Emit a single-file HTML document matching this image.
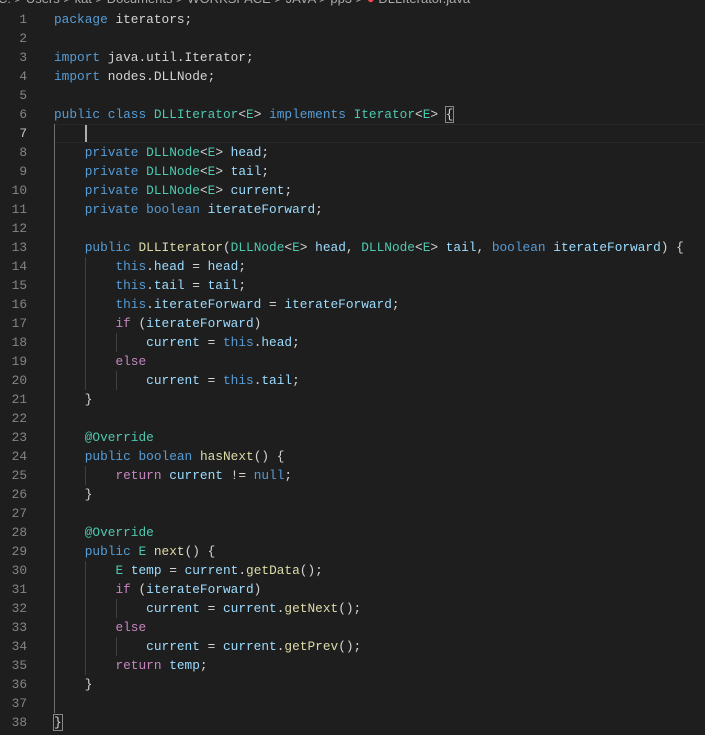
<!DOCTYPE html>
<html><head><meta charset="utf-8">
<style>
html,body{margin:0;padding:0;background:#1e1e1e;}
body{width:705px;height:735px;overflow:hidden;position:relative;}
.bc{position:absolute;left:-2px;top:-9px;font:13px "Liberation Sans",sans-serif;color:#a9a9a9;white-space:pre;}
.ln{position:absolute;left:0;width:27px;text-align:right;font:12.8px/19px "Liberation Mono",monospace;color:#858585;}
.code{position:absolute;left:54px;top:10px;font:12.8px/19px "Liberation Mono",monospace;color:#d4d4d4;white-space:normal;}
.code div{height:19px;white-space:pre;}
.k{color:#569cd6}.t{color:#4ec9b0}.v{color:#9cdcfe}.c{color:#c586c0}.f{color:#dcdcaa}
.g{position:absolute;width:1px;background:#404040;}
.cur{position:absolute;left:54px;right:0;top:124px;height:17px;border-top:1px solid #282828;border-bottom:1px solid #282828;}
.box{outline:1px solid #888;}
</style></head><body>
<div class="bc">C: &gt; Users &gt; kat &gt; Documents &gt; WORKSPACE &gt; JAVA &gt; pp3 &gt; <span style="color:#f14c4c">●</span> DLLIterator.java</div>
<div class="cur"></div>
<div class="ln" style="top:10px">1<br>2<br>3<br>4<br>5<br>6<br><span style="color:#c6c6c6">7</span><br>8<br>9<br>10<br>11<br>12<br>13<br>14<br>15<br>16<br>17<br>18<br>19<br>20<br>21<br>22<br>23<br>24<br>25<br>26<br>27<br>28<br>29<br>30<br>31<br>32<br>33<br>34<br>35<br>36<br>37<br>38</div>
<div class="g" style="left:54px;top:124px;height:589px;background:#707070"></div>
<div class="g" style="left:85px;top:257px;height:133px"></div>
<div class="g" style="left:85px;top:466px;height:19px"></div>
<div class="g" style="left:85px;top:561px;height:114px"></div>
<div class="g" style="left:116px;top:333px;height:19px"></div>
<div class="g" style="left:116px;top:371px;height:19px"></div>
<div class="g" style="left:116px;top:599px;height:19px"></div>
<div class="g" style="left:116px;top:637px;height:19px"></div>
<div style="position:absolute;left:85px;top:125px;width:2px;height:17px;background:#aeafad"></div>
<div class="code">
<div><span class="k">package</span> iterators;</div>
<div></div>
<div><span class="k">import</span> java.util.Iterator;</div>
<div><span class="k">import</span> nodes.DLLNode;</div>
<div></div>
<div><span class="k">public</span> <span class="k">class</span> <span class="t">DLLIterator</span>&lt;<span class="t">E</span>&gt; <span class="k">implements</span> <span class="t">Iterator</span>&lt;<span class="t">E</span>&gt; <span class="box">{</span></div>
<div></div>
<div>    <span class="k">private</span> <span class="t">DLLNode</span>&lt;<span class="t">E</span>&gt; <span class="v">head</span>;</div>
<div>    <span class="k">private</span> <span class="t">DLLNode</span>&lt;<span class="t">E</span>&gt; <span class="v">tail</span>;</div>
<div>    <span class="k">private</span> <span class="t">DLLNode</span>&lt;<span class="t">E</span>&gt; <span class="v">current</span>;</div>
<div>    <span class="k">private</span> <span class="k">boolean</span> <span class="v">iterateForward</span>;</div>
<div></div>
<div>    <span class="k">public</span> <span class="f">DLLIterator</span>(<span class="t">DLLNode</span>&lt;<span class="t">E</span>&gt; <span class="v">head</span>, <span class="t">DLLNode</span>&lt;<span class="t">E</span>&gt; <span class="v">tail</span>, <span class="k">boolean</span> <span class="v">iterateForward</span>) {</div>
<div>        <span class="k">this</span>.<span class="v">head</span> = <span class="v">head</span>;</div>
<div>        <span class="k">this</span>.<span class="v">tail</span> = <span class="v">tail</span>;</div>
<div>        <span class="k">this</span>.<span class="v">iterateForward</span> = <span class="v">iterateForward</span>;</div>
<div>        <span class="c">if</span> (<span class="v">iterateForward</span>)</div>
<div>            <span class="v">current</span> = <span class="k">this</span>.<span class="v">head</span>;</div>
<div>        <span class="c">else</span></div>
<div>            <span class="v">current</span> = <span class="k">this</span>.<span class="v">tail</span>;</div>
<div>    }</div>
<div></div>
<div>    <span class="t">@Override</span></div>
<div>    <span class="k">public</span> <span class="k">boolean</span> <span class="f">hasNext</span>() {</div>
<div>        <span class="c">return</span> <span class="v">current</span> != <span class="k">null</span>;</div>
<div>    }</div>
<div></div>
<div>    <span class="t">@Override</span></div>
<div>    <span class="k">public</span> <span class="t">E</span> <span class="f">next</span>() {</div>
<div>        <span class="t">E</span> <span class="v">temp</span> = <span class="v">current</span>.<span class="f">getData</span>();</div>
<div>        <span class="c">if</span> (<span class="v">iterateForward</span>)</div>
<div>            <span class="v">current</span> = <span class="v">current</span>.<span class="f">getNext</span>();</div>
<div>        <span class="c">else</span></div>
<div>            <span class="v">current</span> = <span class="v">current</span>.<span class="f">getPrev</span>();</div>
<div>        <span class="c">return</span> <span class="v">temp</span>;</div>
<div>    }</div>
<div></div>
<div><span class="box">}</span></div>
</div>
</body></html>
